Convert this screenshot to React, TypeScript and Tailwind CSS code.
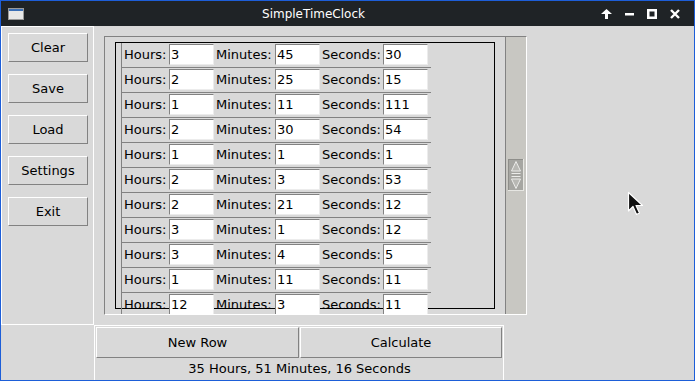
import React from 'react';

const rows: [string, string, string][] = [
  ['3', '45', '30'],
  ['2', '25', '15'],
  ['1', '11', '111'],
  ['2', '30', '54'],
  ['1', '1', '1'],
  ['2', '3', '53'],
  ['2', '21', '12'],
  ['3', '1', '12'],
  ['3', '4', '5'],
  ['1', '11', '11'],
  ['12', '3', '11'],
];

const font = { fontFamily: '"DejaVu Sans", "Liberation Sans", sans-serif' };

const SideButton: React.FC<{ label: string }> = ({ label }) => (
  <button className="w-[80px] h-[29px] bg-[#d9d9d9] border border-t-white border-l-white border-b-[#828282] border-r-[#828282] text-[13px] text-black flex items-center justify-center">
    {label}
  </button>
);

const Entry: React.FC<{ value: string }> = ({ value }) => (
  <div className="w-[45px] h-[21px] bg-white border border-t-[#828282] border-l-[#828282] border-b-[#ececec] border-r-[#ececec] pl-[1px] text-[13px] leading-[19px] text-black">
    {value}
  </div>
);

const TimeRow: React.FC<{ h: string; m: string; s: string }> = ({ h, m, s }) => (
  <div className="h-[25px] w-[310px] border-b border-b-[#828282] border-l border-l-[#828282] flex items-start pt-[1px] shrink-0">
    <div className="w-[47px] h-[21px] pl-[2px] text-[13px] leading-[21px]">Hours:</div>
    <Entry value={h} />
    <div className="w-[61px] h-[21px] pl-[2px] text-[13px] leading-[21px]">Minutes:</div>
    <Entry value={m} />
    <div className="w-[63px] h-[21px] pl-[2px] text-[13px] leading-[21px]">Seconds:</div>
    <Entry value={s} />
  </div>
);

const WideButton: React.FC<{ label: string; w: string }> = ({ label, w }) => (
  <button className={`${w} h-[31px] bg-[#d9d9d9] border border-t-white border-l-white border-b-[#828282] border-r-[#828282] text-[13px] text-black flex items-center justify-center`}>
    {label}
  </button>
);

export default function App() {
  return (
    <div className="relative w-[695px] h-[381px] border border-[#1d5ed8] bg-[#d9d9d9] flex flex-col overflow-hidden text-black" style={font}>
      {/* title bar */}
      <div className="h-[25px] bg-[#1f2326] flex items-center shrink-0">
        <div className="w-[30px] pl-[7px] flex items-center">
          <svg width="16" height="12" viewBox="0 0 16 12">
            <rect x="0.5" y="0.5" width="15" height="11" fill="#e8e8e8" stroke="#9a9a9a" />
            <rect x="1" y="1" width="14" height="2" fill="#3b6fb6" />
          </svg>
        </div>
        <div className="flex-1 text-center text-white text-[12px]">SimpleTimeClock</div>
        <div className="w-[98px] flex items-center gap-[13px] pl-[5px]">
          <svg width="11" height="10" viewBox="0 0 11 10">
            <path d="M5.5 0 L11 5 L7 5 L7 10 L4 10 L4 5 L0 5 Z" fill="white" />
          </svg>
          <svg width="9" height="10" viewBox="0 0 9 10">
            <rect x="0" y="4" width="9" height="2.5" fill="white" />
          </svg>
          <svg width="10" height="10" viewBox="0 0 10 10">
            <rect x="1.25" y="1.25" width="7.5" height="7.5" fill="none" stroke="white" strokeWidth="2.5" />
          </svg>
          <svg width="10" height="10" viewBox="0 0 10 10">
            <path d="M1 1 L9 9 M9 1 L1 9" stroke="white" strokeWidth="2.4" />
          </svg>
        </div>
      </div>

      {/* top section */}
      <div className="flex h-[299px] shrink-0">
        <div className="w-[93px] h-full border border-white flex flex-col gap-[12px] pl-[6px] pt-[6px]">
          <SideButton label="Clear" />
          <SideButton label="Save" />
          <SideButton label="Load" />
          <SideButton label="Settings" />
          <SideButton label="Exit" />
        </div>
        <div className="pl-[10px] pt-[10px]">
          <div className="w-[423px] h-[279px] border border-t-[#828282] border-l-[#828282] border-b-white border-r-white flex">
            <div className="w-[400px] h-[277px] overflow-hidden pl-[10px] pt-[5px]">
              <div className="w-[380px] h-[267px] border border-black pl-[5px]">
                <div className="flex flex-col">
                  {rows.map((r, i) => (
                    <TimeRow key={i} h={r[0]} m={r[1]} s={r[2]} />
                  ))}
                </div>
              </div>
            </div>
            <div className="w-[21px] h-[277px] bg-[#c8c7c2] border-l border-l-[#828282] pl-[2px] pt-[122px]">
              <svg width="16" height="32" viewBox="0 0 16 32">
                <rect x="0" y="0" width="16" height="32" fill="#e6e6e2" />
                <rect x="0" y="0" width="15" height="31" fill="#8e8e8a" />
                <rect x="1" y="1" width="14" height="30" fill="#a6a6a2" />
                <path d="M8 2.5 L12.5 12 L3.5 12 Z" fill="#b8b8b4" stroke="#ececea" strokeWidth="1" />
                <line x1="3.5" y1="14.5" x2="12.5" y2="14.5" stroke="#ececea" />
                <line x1="3.5" y1="17.5" x2="12.5" y2="17.5" stroke="#ececea" />
                <path d="M3.5 20 L12.5 20 L8 29.5 Z" fill="#b8b8b4" stroke="#ececea" strokeWidth="1" />
              </svg>
            </div>
          </div>
        </div>
      </div>

      {/* bottom section */}
      <div className="flex flex-1">
        <div className="w-[93px]" />
        <div className="w-[410px] border-t border-l border-r border-white pt-[1px] pl-[1px] flex flex-col">
          <div className="flex gap-[1px]">
            <WideButton label="New Row" w="w-[203px]" />
            <WideButton label="Calculate" w="w-[202px]" />
          </div>
          <div className="flex-1 flex items-center justify-center text-[13px]">35 Hours, 51 Minutes, 16 Seconds</div>
        </div>
      </div>

      {/* mouse pointer */}
      <svg className="absolute left-[626px] top-[190px]" width="18" height="26" viewBox="0 0 18 26">
        <path d="M1.5 1.5 L1.5 20 L6 15.5 L9.5 23.5 L12.5 22 L9 14.5 L15.5 14.5 Z" fill="#111" stroke="white" strokeWidth="1.2" strokeLinejoin="round" />
      </svg>
    </div>
  );
}
